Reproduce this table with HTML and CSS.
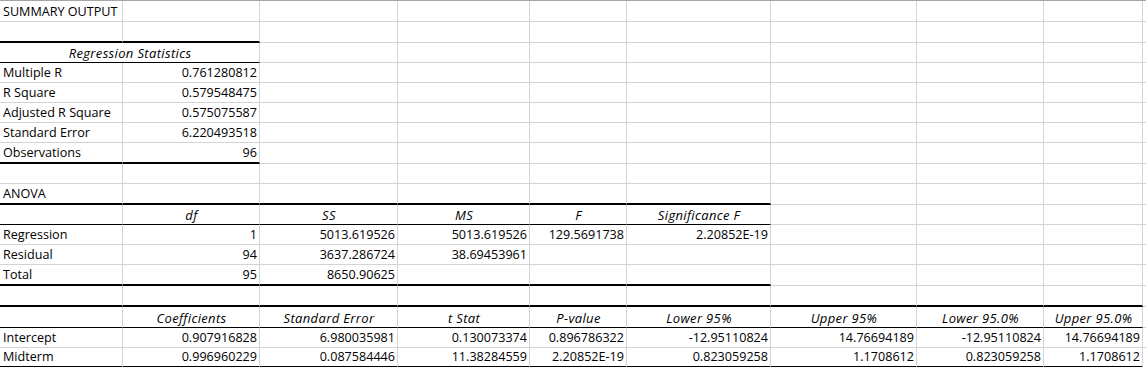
FILE: index.html
```html
<!DOCTYPE html>
<html>
<head>
<meta charset="utf-8">
<link rel="stylesheet" href="styles.css">
</head>
<body>
<div class="sheet">
  <!-- row 1 -->
  <div class="c">SUMMARY OUTPUT</div><div class="c"></div><div class="c"></div><div class="c"></div><div class="c"></div><div class="c"></div><div class="c"></div><div class="c"></div><div class="c"></div><div class="c e"></div>
  <!-- row 2 -->
  <div class="c tb"></div><div class="c tb"></div><div class="c"></div><div class="c"></div><div class="c"></div><div class="c"></div><div class="c"></div><div class="c"></div><div class="c"></div><div class="c e"></div>
  <!-- row 3 -->
  <div class="c nb h span2">Regression Statistics</div><div class="c"></div><div class="c"></div><div class="c"></div><div class="c"></div><div class="c"></div><div class="c"></div><div class="c"></div><div class="c e"></div>
  <!-- row 4 -->
  <div class="c">Multiple R</div><div class="c n">0.761280812</div><div class="c"></div><div class="c"></div><div class="c"></div><div class="c"></div><div class="c"></div><div class="c"></div><div class="c"></div><div class="c e"></div>
  <!-- row 5 -->
  <div class="c">R Square</div><div class="c n">0.579548475</div><div class="c"></div><div class="c"></div><div class="c"></div><div class="c"></div><div class="c"></div><div class="c"></div><div class="c"></div><div class="c e"></div>
  <!-- row 6 -->
  <div class="c">Adjusted R Square</div><div class="c n">0.575075587</div><div class="c"></div><div class="c"></div><div class="c"></div><div class="c"></div><div class="c"></div><div class="c"></div><div class="c"></div><div class="c e"></div>
  <!-- row 7 -->
  <div class="c">Standard Error</div><div class="c n">6.220493518</div><div class="c"></div><div class="c"></div><div class="c"></div><div class="c"></div><div class="c"></div><div class="c"></div><div class="c"></div><div class="c e"></div>
  <!-- row 8 -->
  <div class="c tb">Observations</div><div class="c n tb">96</div><div class="c"></div><div class="c"></div><div class="c"></div><div class="c"></div><div class="c"></div><div class="c"></div><div class="c"></div><div class="c e"></div>
  <!-- row 9 -->
  <div class="c"></div><div class="c"></div><div class="c"></div><div class="c"></div><div class="c"></div><div class="c"></div><div class="c"></div><div class="c"></div><div class="c"></div><div class="c e"></div>
  <!-- row 10 -->
  <div class="c tb">ANOVA</div><div class="c tb"></div><div class="c tb"></div><div class="c tb"></div><div class="c tb"></div><div class="c tb"></div><div class="c"></div><div class="c"></div><div class="c"></div><div class="c e"></div>
  <!-- row 11 -->
  <div class="c nb"></div><div class="c nb h">df</div><div class="c nb h">SS</div><div class="c nb h">MS</div><div class="c nb h">F</div><div class="c nb h">Significance F</div><div class="c"></div><div class="c"></div><div class="c"></div><div class="c e"></div>
  <!-- row 12 -->
  <div class="c">Regression</div><div class="c n">1</div><div class="c n">5013.619526</div><div class="c n">5013.619526</div><div class="c n">129.5691738</div><div class="c n">2.20852E-19</div><div class="c"></div><div class="c"></div><div class="c"></div><div class="c e"></div>
  <!-- row 13 -->
  <div class="c">Residual</div><div class="c n">94</div><div class="c n">3637.286724</div><div class="c n">38.69453961</div><div class="c"></div><div class="c"></div><div class="c"></div><div class="c"></div><div class="c"></div><div class="c e"></div>
  <!-- row 14 -->
  <div class="c tb">Total</div><div class="c n tb">95</div><div class="c n tb">8650.90625</div><div class="c tb"></div><div class="c tb"></div><div class="c tb"></div><div class="c"></div><div class="c"></div><div class="c"></div><div class="c e"></div>
  <!-- row 15 -->
  <div class="c tb"></div><div class="c tb"></div><div class="c tb"></div><div class="c tb"></div><div class="c tb"></div><div class="c tb"></div><div class="c tb"></div><div class="c tb"></div><div class="c tb"></div><div class="c e"></div>
  <!-- row 16 -->
  <div class="c nb"></div><div class="c nb h">Coefficients</div><div class="c nb h">Standard Error</div><div class="c nb h">t Stat</div><div class="c nb h">P-value</div><div class="c nb h">Lower 95%</div><div class="c nb h">Upper 95%</div><div class="c nb h">Lower 95.0%</div><div class="c nb h">Upper 95.0%</div><div class="c e"></div>
  <!-- row 17 -->
  <div class="c">Intercept</div><div class="c n">0.907916828</div><div class="c n">6.980035981</div><div class="c n">0.130073374</div><div class="c n">0.896786322</div><div class="c n">-12.95110824</div><div class="c n">14.76694189</div><div class="c n">-12.95110824</div><div class="c n">14.76694189</div><div class="c e"></div>
  <!-- row 18 -->
  <div class="c tb">Midterm</div><div class="c n tb">0.996960229</div><div class="c n tb">0.087584446</div><div class="c n tb">11.38284559</div><div class="c n tb">2.20852E-19</div><div class="c n tb">0.823059258</div><div class="c n tb">1.1708612</div><div class="c n tb">0.823059258</div><div class="c n tb">1.1708612</div><div class="c e"></div>
</div>
</body>
</html>
```

FILE: styles.css
```css
html, body {
  margin: 0;
  padding: 0;
  background: #ffffff;
}

.sheet {
  display: grid;
  grid-template-columns: 123px 137px 138px 132px 97px 144px 146px 127px 99px 3px;
  grid-template-rows: 21px 21px 20px 20px 20px 20px 20px 21px 20px 21px 20px 20px 20px 21px 21px 21px 20px 20px;
  width: 1146px;
  font-family: "Open Sans", "Noto Sans", "Liberation Sans", sans-serif;
  font-size: 12.6px;
  color: #000000;
  border-top: 1px solid #a6a6a6;
}

.c {
  box-sizing: border-box;
  border-right: 1px solid #d4d4d4;
  border-bottom: 1px solid #d4d4d4;
  display: flex;
  align-items: flex-end;
  padding: 0 2px 1px 3px;
  line-height: 16px;
  white-space: nowrap;
}

.c.e {
  border-right: none;
}

.n {
  justify-content: flex-end;
}

.h {
  justify-content: center;
  font-style: italic;
  font-size: 13px;
  letter-spacing: 0.35px;
}

.span2 {
  grid-column: span 2;
}

.tb {
  border-bottom: 2px solid #000000;
}

.nb {
  border-bottom: 1px solid #000000;
}
```
